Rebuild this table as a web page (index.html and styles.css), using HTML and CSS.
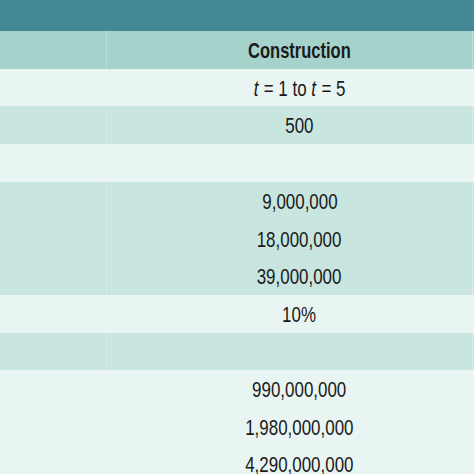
FILE: index.html
```html
<!DOCTYPE html>
<html>
<head>
<meta charset="utf-8">
<link rel="stylesheet" href="styles.css">
</head>
<body>
<div class="table">
  <div class="row top"><div class="c1"></div><div class="c2"></div><div class="c3"></div></div>
  <div class="row head"><div class="c1"></div><div class="c2"><span class="t">Construction</span></div><div class="c3"></div></div>
  <div class="row light r37"><div class="c1"></div><div class="c2"><span class="t"><i>t</i><span class="eq">=</span>1 to <i>t</i><span class="eq">=</span>5</span></div><div class="c3"></div></div>
  <div class="row mid"><div class="c1"></div><div class="c2"><span class="t">500</span></div><div class="c3"></div></div>
  <div class="row light"><div class="c1"></div><div class="c2"></div><div class="c3"></div></div>
  <div class="row mid group"><div class="c1"></div><div class="c2"><span class="line"><span class="t">9,000,000</span></span><span class="line"><span class="t">18,000,000</span></span><span class="line"><span class="t">39,000,000</span></span></div><div class="c3"></div></div>
  <div class="row light"><div class="c1"></div><div class="c2"><span class="t">10%</span></div><div class="c3"></div></div>
  <div class="row mid r37"><div class="c1"></div><div class="c2"></div><div class="c3"></div></div>
  <div class="row light group"><div class="c1"></div><div class="c2"><span class="line"><span class="t">990,000,000</span></span><span class="line"><span class="t">1,980,000,000</span></span><span class="line"><span class="t">4,290,000,000</span></span></div><div class="c3"></div></div>
</div>
</body>
</html>
```

FILE: styles.css
```css
html, body {
  margin: 0;
  padding: 0;
  overflow: hidden;
  background: #e9f5f2;
}
.table {
  width: 474px;
  font-family: "Liberation Sans", Arial, sans-serif;
  font-size: 22px;
  color: #1a1a1a;
}
.row {
  display: grid;
  grid-template-columns: 107px 1fr 2px;
  height: 38px;
}
.row.r37 { height: 37px; }
.c1 { border-right: 1px solid rgba(255,255,255,0.22); }
.c2 {
  display: flex;
  align-items: center;
  justify-content: center;
  padding-left: 20px;
  padding-top: 2px;
  line-height: 1;
}
.c3 { border-left: 1px solid rgba(255,255,255,0.3); }
.t {
  display: inline-block;
  white-space: nowrap;
  transform: scaleX(0.77);
}
.eq { display: inline-block; margin: 0 6px 0 7px; }
.top { height: 31px; background: #438995; }
.top .c1, .top .c3 { border-color: transparent; }
.head { background: #a5d2cb; font-weight: bold; }
.head .t { transform: scaleX(0.75); }
.light { background: #e9f5f2; }
.mid { background: #c8e5e0; }
.group { height: auto; }
.group .c2 {
  flex-direction: column;
  padding-top: 0;
}
.group .line {
  box-sizing: border-box;
  height: 37.7px;
  padding-top: 2px;
  display: flex;
  align-items: center;
}
i { font-style: italic; }
```
